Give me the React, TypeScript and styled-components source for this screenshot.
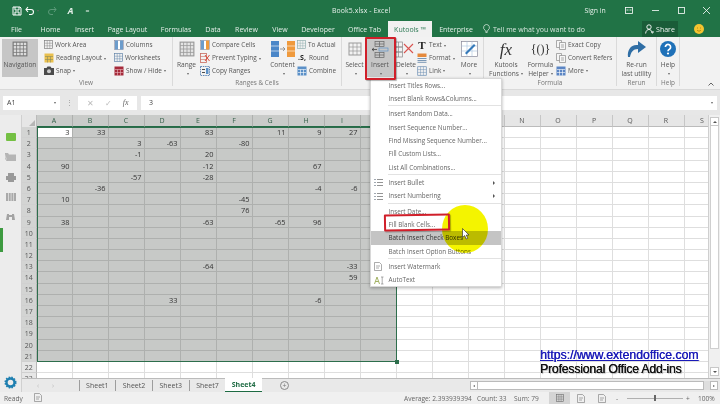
import React from "react";
import styled, { createGlobalStyle } from "styled-components";

const Global = createGlobalStyle`
  html, body { margin: 0; padding: 0; background: #fff; overflow: hidden; }
  * { box-sizing: border-box; }
`;

const UI = `"Open Sans", "Noto Sans", "Liberation Sans", sans-serif`;

const Page = styled.div`
  position: relative; width: 720px; height: 404px; overflow: hidden;
  display: flex; flex-direction: column;
  font-family: ${UI}; font-size: 7px; color: #555; background: #f1f1f1;
  filter: blur(0.3px);
`;

/* Title bar */
const TitleBar = styled.div`
  height: 21px; background: #217346; color: #e6f0ea; display: flex; align-items: center; flex: none;
  font-size: 6.9px;
`;
const QuickBtn = styled.div<{ $w: number }>`
  width: ${p => p.$w}px; display: flex; justify-content: center; align-items: center; flex: none; height: 21px;
`;
const QuickLetter = styled.span`
  font-style: italic; font-weight: 700; font-size: 9px;
`;
const TitleText = styled.div`
  margin-left: 237px; width: 252px; flex: none; white-space: pre; letter-spacing: 0.1px;
`;
const WinBtn = styled.div<{ $w: number; $ml?: number }>`
  width: ${p => p.$w}px; margin-left: ${p => p.$ml ?? 0}px; flex: none; display: flex; justify-content: center; align-items: center; white-space: nowrap;
`;

/* Tabs */
const TabBar = styled.div`
  height: 16px; background: #217346; display: flex; align-items: stretch; flex: none; color: #e4eee8; font-size: 7px;
`;
const Tab = styled.div<{ $w: number; $active?: boolean }>`
  width: ${p => p.$w}px; flex: none; display: flex; align-items: center; justify-content: center; white-space: nowrap;
  background: ${p => (p.$active ? "#f1f1f1" : "transparent")};
  color: ${p => (p.$active ? "#2e7a55" : "#e4eee8")};
`;
const TellMe = styled.div`
  width: 162px; flex: none; display: flex; align-items: center; gap: 3px; padding-left: 3px; white-space: nowrap; color: #d5e5dc;
`;
const ShareBtn = styled.div`
  width: 36px; flex: none; background: #1a5c38; display: flex; align-items: center; justify-content: center; gap: 2px; color: #eef5f1;
`;
const Smile = styled.div`
  margin-left: 16px; width: 10px; height: 10px; margin-top: 3px; border-radius: 50%; background: #f4c430;
  display: flex; align-items: center; justify-content: center;
`;

/* Ribbon */
const Ribbon = styled.div`
  height: 53px; background: #f2f2f2; display: flex; flex: none; border-bottom: 1px solid #d9d9d9; position: relative;
`;
const Group = styled.div<{ $w: number }>`
  width: ${p => p.$w}px; flex: none; display: flex; flex-direction: column;
  border-right: 1px solid #dadada;
  margin-bottom: 3px;
`;
const GroupBody = styled.div<{ $pad?: number }>`
  height: 40px; display: flex; padding-top: 1.5px; padding-left: ${p => p.$pad ?? 0}px;
`;
const GroupLabel = styled.div`
  text-align: center; font-size: 6.4px; color: #777; line-height: 8px; margin-top: 2px;
`;
const BigBtn = styled.div<{ $w: number; $on?: boolean; $mr?: number }>`
  width: ${p => p.$w}px; flex: none; height: 38px; display: flex; flex-direction: column; align-items: center;
  margin-right: ${p => p.$mr ?? 0}px; text-align: center; line-height: 9px; white-space: nowrap;
  background: ${p => (p.$on ? "#c6c6c6" : "transparent")}; font-size: 6.6px; color: #555;
  padding-top: 2px;
`;
const IconSlot = styled.div`
  height: 17px; display: flex; align-items: center; justify-content: center; flex: none; margin-bottom: 2px;
`;
const SerifGlyph = styled(IconSlot)<{ $size: number; $italic?: boolean }>`
  font-family: "Liberation Serif", serif; font-size: ${p => p.$size}px; color: #333;
  font-style: ${p => (p.$italic ? "italic" : "normal")};
`;
const Caret = styled.span`
  display: inline-block; width: 0; height: 0; border: 1.5px solid transparent; border-top: 2px solid #666; border-bottom: 0; margin-left: 2px; vertical-align: middle;
`;
const TurnedCaret = styled(Caret)<{ $deg: number }>`
  margin: 0; transform: rotate(${p => p.$deg}deg);
`;
const Stack = styled.div<{ $w: number }>`
  width: ${p => p.$w}px; flex: none; display: flex; flex-direction: column;
`;
const SmallBtn = styled.div`
  height: 13px; display: flex; align-items: center; gap: 2px; white-space: nowrap; color: #555; font-size: 6.45px;
`;
const GlyphIcon = styled.span<{ $serif?: boolean }>`
  width: 10px; text-align: center; line-height: 10px; color: #222;
  font-family: ${p => (p.$serif ? `"Liberation Serif", serif` : "inherit")};
  font-size: ${p => (p.$serif ? 11 : 7)}px; font-weight: 700;
`;
const Collapse = styled.div`
  position: absolute; right: 6px; bottom: 3px; color: #555; line-height: 0;
`;

/* Formula bar */
const FormulaBar = styled.div`
  height: 25px; background: #e7e7e7; display: flex; align-items: center; padding: 0 3px; flex: none;
`;
const NameBox = styled.div`
  width: 57px; height: 14px; background: #fff; display: flex; align-items: center; justify-content: space-between;
  padding: 0 4px; font-size: 7px; color: #444;
`;
const Dots = styled.div`
  width: 18px; text-align: center; color: #999; font-size: 7px;
`;
const FxBox = styled.div`
  width: 59px; height: 14px; margin-right: 4px; background: #fff; display: flex; align-items: center; justify-content: space-around; padding: 0 3px; color: #bbb; font-size: 8px;
`;
const FxMark = styled.span`
  font-family: "Liberation Serif", serif; font-style: italic; color: #666;
`;
const FormulaInput = styled.div`
  flex: 1; height: 14px; background: #fff; display: flex; align-items: center; justify-content: space-between;
  padding: 0 4px 0 8px; color: #444; font-size: 7px;
`;

/* Sheet */
const SheetRegion = styled.div`
  flex: 1; display: flex; min-height: 0; background: #fff;
`;
const Sidebar = styled.div`
  width: 22px; flex: none; background: #ececec; border-right: 1px solid #d0d0d0; display: flex; flex-direction: column; align-items: center;
  padding-top: 12px;
`;
const SideIcon = styled.div<{ $h: number }>`
  height: ${p => p.$h}px; display: flex; align-items: center; justify-content: center; flex: none;
`;
const SideMark = styled.div`
  align-self: flex-start; width: 3px; height: 24px; background: #3d9a40; flex: none; margin-top: 2px;
`;
const Gear = styled.div`
  margin-top: auto; margin-bottom: 3px; line-height: 0;
`;
const GridArea = styled.div`
  flex: 1; min-width: 0; display: flex; flex-direction: column;
`;
const GridTop = styled.div`
  flex: 1; min-height: 0; display: flex;
`;
const GridPane = styled.div`
  flex: 1; min-width: 0; overflow: hidden; position: relative;
`;
const HeadRow = styled.div`
  display: flex; height: 12px;
`;
const Corner = styled.div`
  width: 14.5px; flex: none; background: #e6e6e6; position: relative; border-right: 1px solid #bbb;
  &::after { content: ""; position: absolute; right: 1px; bottom: 1px; border: 3px solid transparent; border-right-color: #b5b5b5; border-bottom-color: #b5b5b5; }
`;
const ColHead = styled.div<{ $sel?: boolean }>`
  width: 36px; flex: none; text-align: center; line-height: 12px; font-size: 7px;
  background: ${p => (p.$sel ? "#c9cbc9" : "#e6e6e6")}; color: ${p => (p.$sel ? "#35604a" : "#555")};
  border-right: 1px solid ${p => (p.$sel ? "#aeb0ae" : "#c6c6c6")};
  border-bottom: 1px solid ${p => (p.$sel ? "#256b47" : "#bbb")};
`;
const Row = styled.div`
  display: flex; height: 11.2px;
`;
const RowHead = styled.div<{ $sel?: boolean }>`
  width: 14.5px; flex: none; text-align: center; font-size: 7px; line-height: 11px; color: #555;
  background: ${p => (p.$sel ? "#d3d4d3" : "#e6e6e6")};
  border-right: 1px solid #b5b5b5;
  border-bottom: 1px solid #d0d0d0;
`;
const Cell = styled.div<{ $sel?: boolean; $active?: boolean }>`
  width: 36px; flex: none; text-align: right; padding-right: 2px; font-size: 7.4px; line-height: 11px; color: #333;
  background: ${p => (p.$active ? "#fff" : p.$sel ? "#c7c9c7" : "#fff")};
  border-right: 1px solid ${p => (p.$sel ? "#aeb0ae" : "#dedede")};
  border-bottom: 1px solid ${p => (p.$sel ? "#aeb0ae" : "#dedede")};
`;
const SelectionFrame = styled.div`
  position: absolute; left: 14.5px; top: 12px; width: 360.5px; height: 235.2px; border: 1px solid #2d6e4c; pointer-events: none;
  &::after { content: ""; position: absolute; right: -2.5px; bottom: -2.5px; width: 4px; height: 4px; background: #2d6e4c; }
`;
const VScroll = styled.div`
  width: 12px; flex: none; background: #f0f0f0; border-left: 1px solid #cfcfcf; display: flex; flex-direction: column; padding: 2px 1px;
`;
const VArrow = styled.div<{ $down?: boolean }>`
  height: 9px; flex: none; background: #fff; border: 1px solid #c8c8c8; display: flex; align-items: center; justify-content: center;
  &::after { content: ""; border: 2px solid transparent; ${p => (p.$down ? "border-top: 2.5px solid #555; border-bottom: 0;" : "border-bottom: 2.5px solid #555; border-top: 0;")} }
`;
const VThumb = styled.div`
  flex: 1; background: #fff; border-left: 1px solid #cfcfcf; border-right: 1px solid #cfcfcf; margin-bottom: 18px; border-bottom: 1px solid #cfcfcf;
`;

/* Sheet tabs */
const TabStrip = styled.div`
  height: 14px; flex: none; background: #e9e9e9; display: flex; align-items: stretch; color: #555; font-size: 7px; border-top: 1px solid #bbb;
`;
const NavArrows = styled.div`
  width: 56.5px; flex: none; display: flex; gap: 13px; align-items: center; padding-left: 15px; color: #bbb; font-size: 7px;
`;
const SheetTab = styled.div<{ $active?: boolean }>`
  width: 36.7px; flex: none; display: flex; align-items: center; justify-content: center;
  border-left: ${p => (p.$active ? "none" : "1px solid #9d9d9d")};
  margin: ${p => (p.$active ? "-1px 0 0 0" : "1px 0")};
  background: ${p => (p.$active ? "#fff" : "transparent")};
  color: ${p => (p.$active ? "#1e6b43" : "#555")};
  font-weight: ${p => (p.$active ? 700 : 400)};
  border-bottom: ${p => (p.$active ? "1.5px solid #1e6b43" : "none")};
`;
const AddSheet = styled.div`
  width: 9px; height: 9px; margin: auto 0 auto 18px; border: 1px solid #8a8a8a; border-radius: 50%; display: flex; align-items: center; justify-content: center;
  font-size: 7px; line-height: 7px; color: #777; flex: none;
`;
const HScrollZone = styled.div`
  margin-left: auto; width: 259px; flex: none; display: flex; align-items: center; padding-right: 2px; padding-left: 9px;
`;
const HArrow = styled.div`
  width: 8px; height: 9px; background: #fff; border: 1px solid #bbb; flex: none; display: flex; align-items: center; justify-content: center;
`;
const HThumb = styled.div`
  width: 226px; height: 9px; background: #fff; border: 1px solid #bbb; border-left: none; flex: none;
`;
const HTrack = styled.div`
  flex: 1; height: 9px; background: #dedede;
`;

/* Status */
const StatusBar = styled.div`
  height: 12px; flex: none; background: #f0f0f0; display: flex; align-items: center; font-size: 6.6px; color: #666; white-space: nowrap;
`;
const StatusItem = styled.div<{ $w: number; $ml?: number }>`
  width: ${p => p.$w}px; margin-left: ${p => p.$ml ?? 0}px; flex: none;
`;
const ViewBtn = styled.div<{ $on?: boolean }>`
  width: 21px; height: 12px; flex: none; display: flex; align-items: center; justify-content: center;
  background: ${p => (p.$on ? "#d4d4d4" : "transparent")};
`;
const Zoom = styled.div`
  width: 56px; flex: none; margin: 0 3px; height: 1px; background: #b0b0b0; position: relative;
  &::after { content: ""; position: absolute; left: 27px; top: -2.5px; width: 2px; height: 6px; background: #666; }
`;

/* Overlays */
const Menu = styled.div`
  position: absolute; left: 370px; top: 77.6px; width: 132px; height: 209.4px; background: #fff;
  box-shadow: 0 1px 3px rgba(0,0,0,.3); border: 1px solid #d8d8d8; z-index: 5;
`;
const MenuItem = styled.div<{ $hover?: boolean }>`
  height: 13.4px; display: flex; align-items: center; padding-left: 17.5px; position: relative; font-size: 6.35px;
  color: ${p => (p.$hover ? "#333" : "#666")};
  background: ${p => (p.$hover ? "#c4c4c4" : "transparent")}; white-space: nowrap;
`;
const MenuIcon = styled.span`
  position: absolute; left: 3px; top: 2.5px; line-height: 0;
`;
const MenuSub = styled.span`
  position: absolute; right: 6px; top: 5px; border: 2px solid transparent; border-left: 2.5px solid #555; border-right: 0;
`;
const MenuSep = styled.div`
  height: 1px; margin: 0 0 0.75px 17px; background: #e2e2e2;
`;
const RedBox = styled.div<{ $x: number; $y: number; $w: number; $h: number; $r?: number }>`
  position: absolute; left: ${p => p.$x}px; top: ${p => p.$y}px; width: ${p => p.$w}px; height: ${p => p.$h}px;
  border: 2px solid #d01f2a; border-radius: 1px; transform: rotate(${p => p.$r ?? 0}deg); z-index: 7; box-shadow: 1px 1px 1px rgba(0,0,0,.3);
`;
const Spot = styled.div`
  position: absolute; left: 442px; top: 205px; width: 46px; height: 48px; border-radius: 50%; background: #f4f400; mix-blend-mode: multiply; z-index: 6;
`;
const Pointer = styled.svg`
  position: absolute; left: 462px; top: 228px; z-index: 8;
`;
const Promo = styled.div`
  position: absolute; left: 540px; top: 348px; z-index: 4; font-family: "Liberation Sans", Arial, sans-serif; font-size: 12.25px; line-height: 14px; white-space: nowrap;
`;
const PromoLink = styled.div`
  color: #1a1ab8; text-decoration: underline; text-shadow: 0.4px 0 0 #1a1ab8;
`;
const PromoLine = styled.div`
  color: #111; letter-spacing: -0.2px; text-shadow: 0.2px 0 0 #111, 1px 1px 1px rgba(0,0,0,.3);
`;

/* Drawings */
const GridIcon = ({ s = 12, c = "#888", fill = "none", n = 3 }: { s?: number; c?: string; fill?: string; n?: number }) => {
  const lines = Array.from({ length: n - 1 }, (_, i) => ((i + 1) * 12) / n + 1);
  return (
    <svg width={s} height={s} viewBox="0 0 14 14">
      <rect x="1" y="1" width="12" height="12" fill={fill} stroke={c} />
      {lines.map(v => (
        <g key={v} stroke={c} strokeWidth="0.7">
          <line x1={v} y1="1" x2={v} y2="13" />
          <line x1="1" y1={v} x2="13" y2={v} />
        </g>
      ))}
    </svg>
  );
};
const ColsIcon = ({ a, b }: { a: string; b: string }) => (
  <svg width="10" height="10" viewBox="0 0 10 10">
    <rect x="0.5" y="0.5" width="9" height="9" fill="#fff" stroke="#889" strokeWidth="0.6" />
    <rect x="1" y="0.5" width="3" height="9" fill={a} />
    <rect x="6" y="0.5" width="3" height="9" fill={b} />
  </svg>
);
const SolidIcon = ({ c, c2 }: { c: string; c2?: string }) => (
  <svg width="10" height="10" viewBox="0 0 10 10">
    <rect x="0.5" y="0.5" width="9" height="9" fill={c} />
    <path d="M1 3.5h8M1 6.5h8M3.5 3.5v6M6.5 3.5v6" stroke={c2 ?? "#fff"} strokeWidth="0.6" />
  </svg>
);
const PreventIcon = () => (
  <svg width="10" height="10" viewBox="0 0 10 10" fill="none">
    <rect x="0.5" y="0.5" width="6" height="9" stroke="#c96a5e" strokeWidth="0.8" />
    <path d="M.5 3.500h6M.5 6.500h6" stroke="#c96a5e" strokeWidth="0.6" />
    <path d="M5 2l4.500 6M9.500 2L5 8" stroke="#d8402f" strokeWidth="0.9" />
  </svg>
);
const CopyRangeIcon = () => (
  <svg width="10" height="10" viewBox="0 0 10 10" fill="none">
    <rect x="0.5" y="0.5" width="9" height="9" stroke="#3f6fa8" strokeWidth="0.8" strokeDasharray="1.500 .8" />
    <path d="M2 3.500h3M2 6.500h3" stroke="#222" strokeWidth="0.8" />
    <rect x="6" y="2" width="2.500" height="6" fill="#5b90c7" />
  </svg>
);
const FormatIcon = () => (
  <svg width="10" height="10" viewBox="0 0 10 10">
    <rect x="0.500" y="0.500" width="9" height="3.500" fill="#e58a3c" />
    <path d="M.5 5.500h9M.5 7.500h9M.5 9.300h9" stroke="#5a7fa5" strokeWidth="0.8" />
  </svg>
);
const DocsIcon = () => (
  <svg width="10" height="10" viewBox="0 0 10 10" fill="#f6f6f6" stroke="#8a8a8a" strokeWidth="0.7">
    <path d="M.5.500h5v7h-5z" /><path d="M3.500 2.500h6v7h-6z" /><path d="M5 5h3M5 7h3" />
  </svg>
);
const SaveIcon = () => (
  <svg width="10" height="10" viewBox="0 0 10 10" fill="none" stroke="#fff" strokeWidth="1">
    <path d="M1 1h7l1 1v7H1z" /><path d="M3 1v3h4V1M3 9V6h4v3" />
  </svg>
);
const UndoIcon = () => (
  <svg width="10" height="9" viewBox="0 0 10 9" fill="none" stroke="#fff" strokeWidth="1.1">
    <path d="M1 3.5h5a2.5 2.5 0 0 1 0 5H4" /><path d="M3 1L1 3.5 3 6" />
  </svg>
);
const RedoIcon = () => (
  <svg width="10" height="9" viewBox="0 0 10 9" fill="none" stroke="#5c9a79" strokeWidth="1">
    <path d="M9 3.5H4a2.5 2.5 0 0 0 0 5h2" /><path d="M7 1l2 2.5L7 6" />
  </svg>
);
const Bulb = () => (
  <svg width="7" height="10" viewBox="0 0 7 10" fill="none" stroke="#e6f0ea" strokeWidth="0.7">
    <path d="M3.5 .5a3 3 0 0 0-1.6 5.5c.4.4.5.8.5 1.3h2.2c0-.5.1-.9.5-1.3A3 3 0 0 0 3.5.5zM2.5 8.5h2" />
  </svg>
);
const Person = () => (
  <svg width="9" height="10" viewBox="0 0 9 10" fill="none" stroke="#fff" strokeWidth="0.9">
    <circle cx="4" cy="3" r="2.2" /><path d="M.6 9.5c.3-3 2-4 3.4-4s3 1 3.4 4M6 8h3" />
  </svg>
);
const ReRun = () => (
  <svg width="20" height="17" viewBox="0 0 20 17">
    <path d="M1 16C0 9 4 3 11 4V0l8 6-8 6V8C6 8 4 11 3 16z" fill="#2f6ea5" />
  </svg>
);
const HelpIcon = () => (
  <svg width="16" height="16" viewBox="0 0 16 16">
    <circle cx="8" cy="8" r="8" fill="#1f71b8" />
    <path d="M5.4 6a2.6 2.6 0 1 1 4 2.2C8.400 8.800 8 9.200 8 10.200" fill="none" stroke="#fff" strokeWidth="1.7" />
    <circle cx="8" cy="12.500" r="1.100" fill="#fff" />
  </svg>
);
const InsertIcon = () => (
  <svg width="18" height="17" viewBox="0 0 18 17" fill="none" stroke="#666" strokeWidth="0.7">
    <rect x="4" y="0.500" width="9" height="5" /><path d="M8.500.5v5M4 3h9" />
    <rect x="4" y="11.500" width="9" height="5" /><path d="M8.500 11.500v5M4 14h9" />
    <rect x="8" y="7" width="9" height="3" stroke="#5d93c9" /><path d="M6 8.500H1M3 7L1 8.500 3 10" stroke="#333" />
  </svg>
);
const DeleteIcon = () => (
  <svg width="24" height="17" viewBox="0 0 24 17" fill="none" stroke="#888" strokeWidth="0.7">
    <rect x="0.500" y="1" width="8" height="5" /><rect x="0.500" y="11" width="8" height="5" /><rect x="0.500" y="6" width="8" height="5" />
    <path d="M4.500 1v15" /><path d="M10 3l9 9M19 3l-9 9" stroke="#d9534f" strokeWidth="1.1" />
  </svg>
);
const ContentIcon = () => (
  <svg width="24" height="17" viewBox="0 0 24 17">
    <rect x="0" y="0" width="8" height="16" fill="#4a86c8" />
    <rect x="16" y="0" width="8" height="16" fill="#ef9a3d" />
    <path d="M0 5h8M0 10h8M16 5h8M16 10h8" stroke="#fff" strokeWidth="0.6" />
    <path d="M9 8h5M12 6l2 2-2 2" stroke="#777" strokeWidth="0.7" fill="none" />
  </svg>
);
const MoreIcon = () => (
  <svg width="17" height="16" viewBox="0 0 17 16">
    <rect x="0.500" y="0.500" width="16" height="15" fill="#fff" stroke="#889" strokeWidth="0.7" />
    <path d="M0.500 5h16M0.500 10h16M6 .5v15M11 .5v15" stroke="#a9c3dd" strokeWidth="0.6" />
    <path d="M4 12L13 3l1.500 1.500-9 9z" fill="#3579b9" />
  </svg>
);
const Camera = () => (
  <svg width="10" height="9" viewBox="0 0 10 9">
    <path d="M0 2h2.500l1-1.500h3L7.500 2H10v7H0z" fill="#4b4b4b" /><circle cx="5" cy="5.300" r="2" fill="#ccc" />
  </svg>
);
const ListIcon = () => (
  <svg width="9" height="9" viewBox="0 0 9 9" stroke="#666" strokeWidth="0.7">
    <path d="M3 1.500h6M3 4.500h6M3 7.500h6" /><path d="M0.500 1.500h1M0.500 4.500h1M0.500 7.500h1" strokeWidth="1.100" stroke="#456" />
  </svg>
);
const PageIcon = () => (
  <svg width="8" height="9" viewBox="0 0 8 9" fill="none" stroke="#888" strokeWidth="0.7">
    <path d="M.5.500h5l2 2v6h-7z" /><path d="M2 4h4M2 6h3" />
  </svg>
);
const AutoTextIcon = () => (
  <svg width="10" height="9" viewBox="0 0 10 9" fill="none">
    <path d="M.5 8L3 1l2.500 7M1.500 5.500h3" stroke="#9aaa55" strokeWidth="0.9" />
    <path d="M7 1h2.500M8.200 1v7M7 8h2.500" stroke="#777" strokeWidth="0.6" />
  </svg>
);
const FolderIcon = () => (
  <svg width="11" height="10" viewBox="0 0 11 10">
    <path d="M0 1h3l1 1.500h7V9H2z" fill="#b5b5b5" /><path d="M0 1v5l2 3" stroke="#999" fill="none" strokeWidth=".6" />
  </svg>
);
const ColumnsSideIcon = () => (
  <svg width="10" height="8" viewBox="0 0 10 8" fill="#a9a9a9">
    <rect x="0" width="2" height="8" /><rect x="2.700" width="2" height="8" /><rect x="5.400" width="2" height="8" /><rect x="8" width="2" height="8" />
  </svg>
);
const GearIcon = () => (
  <svg width="13" height="13" viewBox="0 0 13 13">
    <circle cx="6.500" cy="6.500" r="4" fill="none" stroke="#1e7fb0" strokeWidth="2.400" />
    <circle cx="6.500" cy="6.500" r="5.300" fill="none" stroke="#1e7fb0" strokeWidth="1.500" strokeDasharray="1.500 1.300" />
  </svg>
);

const ICols = "ABCDEFGHIJKLMNOPQRS".split("");
const DATA: Record<number, Record<string, number>> = {
  1: { A: 3, B: 33, E: 83, G: 11, H: 9, I: 27 },
  2: { C: 3, D: -63, F: -80 },
  3: { C: -1, E: 20 },
  4: { A: 90, E: -12, H: 67 },
  5: { C: -57, E: -28 },
  6: { B: -36, H: -4, I: -6 },
  7: { A: 10, F: -45 },
  8: { F: 76 },
  9: { A: 38, E: -63, G: -65, H: 96 },
  13: { E: -64, I: -33 },
  14: { I: 59 },
  16: { D: 33, H: -6 },
};
const ROWS = Array.from({ length: 23 }, (_, i) => i + 1);
const isSelCol = (c: string) => "ABCDEFGHIJ".includes(c);

const Small = ({ icon, label, caret }: { icon: React.ReactNode; label: string; caret?: boolean }) => (
  <SmallBtn>{icon}<span>{label}{caret && <Caret />}</span></SmallBtn>
);

export default function App() {
  return (
    <Page>
      <Global />
      <TitleBar>
        <QuickBtn $w={11} />
        <QuickBtn $w={11}><SaveIcon /></QuickBtn>
        <QuickBtn $w={20}><UndoIcon /><Caret /></QuickBtn>
        <QuickBtn $w={19}><RedoIcon /></QuickBtn>
        <QuickBtn $w={19}><QuickLetter>A</QuickLetter></QuickBtn>
        <QuickBtn $w={15}>=</QuickBtn>
        <TitleText>{"Book5.xlsx\u00a0-\u00a0Excel"}</TitleText>
        <WinBtn $w={22}>Sign in</WinBtn>
        <WinBtn $w={22} $ml={12}>
          <svg width="8" height="7" viewBox="0 0 8 7" fill="none" stroke="#fff" strokeWidth="0.8"><rect x=".5" y=".5" width="7" height="6" /><path d="M1.500 3h2M4.500 3h2" /></svg>
        </WinBtn>
        <WinBtn $w={30}><svg width="7" height="7" viewBox="0 0 7 7"><path d="M0 3.500h7" stroke="#fff" strokeWidth=".8" /></svg></WinBtn>
        <WinBtn $w={22}><svg width="7" height="7" viewBox="0 0 7 7" fill="none"><rect x=".5" y=".5" width="6" height="6" stroke="#fff" strokeWidth=".8" /></svg></WinBtn>
        <WinBtn $w={28}><svg width="7" height="7" viewBox="0 0 7 7"><path d="M0 0l7 7M7 0L0 7" stroke="#fff" strokeWidth=".8" /></svg></WinBtn>
      </TitleBar>

      <TabBar>
        <Tab $w={33}>File</Tab>
        <Tab $w={35}>Home</Tab>
        <Tab $w={33}>Insert</Tab>
        <Tab $w={53}>Page Layout</Tab>
        <Tab $w={44}>Formulas</Tab>
        <Tab $w={30}>Data</Tab>
        <Tab $w={37}>Review</Tab>
        <Tab $w={30}>View</Tab>
        <Tab $w={46}>Developer</Tab>
        <Tab $w={47}>Office Tab</Tab>
        <Tab $w={44} $active>Kutools ™</Tab>
        <Tab $w={48}>Enterprise</Tab>
        <TellMe><Bulb />Tell me what you want to do</TellMe>
        <ShareBtn><Person />Share</ShareBtn>
        <Smile>
          <svg width="8" height="8" viewBox="0 0 8 8" fill="none" stroke="#8a6a00" strokeWidth="0.6"><path d="M2 5c1 1.500 3 1.500 4 0M2.500 2.500v1M5.500 2.500v1" /></svg>
        </Smile>
      </TabBar>

      <Ribbon>
        <Group $w={173}>
          <GroupBody $pad={2}>
            <BigBtn $w={36} $on $mr={6}>
              <IconSlot><GridIcon s={16} c="#777" fill="#dcdcdc" n={4} /></IconSlot>
              Navigation
            </BigBtn>
            <Stack $w={70}>
              <Small icon={<GridIcon s={9} c="#777" />} label="Work Area" />
              <Small icon={<SolidIcon c="#e9c04f" c2="#8a8a5a" />} label="Reading Layout" caret />
              <Small icon={<Camera />} label="Snap" caret />
            </Stack>
            <Stack $w={60}>
              <Small icon={<ColsIcon a="#6d9ccb" b="#6d9ccb" />} label="Columns" />
              <Small icon={<GridIcon s={9} c="#5a7fa5" />} label="Worksheets" />
              <Small icon={<SolidIcon c="#a52a3a" c2="#e9b9bf" />} label="Show / Hide" caret />
            </Stack>
          </GroupBody>
          <GroupLabel>View</GroupLabel>
        </Group>

        <Group $w={169}>
          <GroupBody $pad={3}>
            <BigBtn $w={21} $mr={3}>
              <IconSlot><GridIcon s={16} c="#999" fill="#e4e4e4" n={4} /></IconSlot>
              Range
              <div><Caret /></div>
            </BigBtn>
            <Stack $w={70}>
              <Small icon={<ColsIcon a="#6d9ccb" b="#ef9a3d" />} label="Compare Cells" />
              <Small icon={<PreventIcon />} label="Prevent Typing" caret />
              <Small icon={<CopyRangeIcon />} label="Copy Ranges" />
            </Stack>
            <BigBtn $w={25} $mr={2}>
              <IconSlot><ContentIcon /></IconSlot>
              Content
              <div><Caret /></div>
            </BigBtn>
            <Stack $w={45}>
              <Small icon={<GridIcon s={9} c="#8aa" />} label="To Actual" />
              <Small icon={<GlyphIcon>.S,</GlyphIcon>} label="Round" />
              <Small icon={<SolidIcon c="#5b90c7" />} label="Combine" />
            </Stack>
          </GroupBody>
          <GroupLabel>Ranges &amp; Cells</GroupLabel>
        </Group>

        <Group $w={142}>
          <GroupBody $pad={2}>
            <BigBtn $w={21}>
              <IconSlot><GridIcon s={14} c="#999" /></IconSlot>
              Select
              <div><Caret /></div>
            </BigBtn>
            <BigBtn $w={30} $on>
              <IconSlot><InsertIcon /></IconSlot>
              Insert
              <div><Caret /></div>
            </BigBtn>
            <BigBtn $w={22}>
              <IconSlot><DeleteIcon /></IconSlot>
              Delete
              <div><Caret /></div>
            </BigBtn>
            <Stack $w={40}>
              <Small icon={<GlyphIcon $serif>T</GlyphIcon>} label="Text" caret />
              <Small icon={<FormatIcon />} label="Format" caret />
              <Small icon={<GridIcon s={10} c="#6c8fb3" />} label="Link" caret />
            </Stack>
            <BigBtn $w={24}>
              <IconSlot><MoreIcon /></IconSlot>
              More
              <div><Caret /></div>
            </BigBtn>
          </GroupBody>
          <GroupLabel />
        </Group>

        <Group $w={133}>
          <GroupBody $pad={3}>
            <BigBtn $w={38}>
              <SerifGlyph $size={17} $italic>fx</SerifGlyph>
              Kutools
              <div>Functions<Caret /></div>
            </BigBtn>
            <BigBtn $w={31}>
              <SerifGlyph $size={12}>{"{()}"}</SerifGlyph>
              Formula
              <div>Helper<Caret /></div>
            </BigBtn>
            <Stack $w={60}>
              <Small icon={<DocsIcon />} label="Exact Copy" />
              <Small icon={<DocsIcon />} label="Convert Refers" />
              <Small icon={<SolidIcon c="#5b85c4" />} label="More" caret />
            </Stack>
          </GroupBody>
          <GroupLabel>Formula</GroupLabel>
        </Group>

        <Group $w={40}>
          <GroupBody>
            <BigBtn $w={39}>
              <IconSlot><ReRun /></IconSlot>
              Re-run
              <div>last utility</div>
            </BigBtn>
          </GroupBody>
          <GroupLabel>Rerun</GroupLabel>
        </Group>

        <Group $w={23}>
          <GroupBody>
            <BigBtn $w={22}>
              <IconSlot><HelpIcon /></IconSlot>
              Help
              <div><Caret /></div>
            </BigBtn>
          </GroupBody>
          <GroupLabel>Help</GroupLabel>
        </Group>
        <Collapse>
          <svg width="6" height="4" viewBox="0 0 6 4" fill="none" stroke="#555" strokeWidth="0.9"><path d="M.5 3.500L3 1l2.500 2.500" /></svg>
        </Collapse>
      </Ribbon>

      <FormulaBar>
        <NameBox>A1<Caret /></NameBox>
        <Dots>⋮</Dots>
        <FxBox><span>✕</span><span>✓</span><FxMark>fx</FxMark></FxBox>
        <FormulaInput>3<Caret /></FormulaInput>
      </FormulaBar>

      <SheetRegion>
        <Sidebar>
          <SideIcon $h={20}>
            <svg width="10" height="8" viewBox="0 0 10 8"><rect width="10" height="8" rx="1" fill="#74c043" /></svg>
          </SideIcon>
          <SideIcon $h={20}><FolderIcon /></SideIcon>
          <SideIcon $h={20}>
            <svg width="10" height="9" viewBox="0 0 10 9"><path d="M2 0h6v3H2zM0 3h10v4H8v2H2V7H0z" fill="#999" /></svg>
          </SideIcon>
          <SideIcon $h={20}><ColumnsSideIcon /></SideIcon>
          <SideIcon $h={19}>
            <svg width="11" height="9" viewBox="0 0 11 9"><path d="M1 8l1-6h2v6zM7 8V2h2l1 6zM4 3h3v2H4z" fill="#a3a3a3" /></svg>
          </SideIcon>
          <SideMark />
          <Gear><GearIcon /></Gear>
        </Sidebar>

        <GridArea>
          <GridTop>
            <GridPane>
              <HeadRow>
                <Corner />
                {ICols.map(c => <ColHead key={c} $sel={isSelCol(c)}>{c}</ColHead>)}
              </HeadRow>
              {ROWS.map(r => (
                <Row key={r}>
                  <RowHead $sel={r <= 21}>{r}</RowHead>
                  {ICols.map(c => (
                    <Cell key={c} $sel={r <= 21 && isSelCol(c)} $active={r === 1 && c === "A"}>
                      {DATA[r]?.[c]}
                    </Cell>
                  ))}
                </Row>
              ))}
              <SelectionFrame />
            </GridPane>
            <VScroll>
              <VArrow />
              <VThumb />
              <VArrow $down />
            </VScroll>
          </GridTop>

          <TabStrip>
            <NavArrows><span>‹</span><span>›</span></NavArrows>
            {["Sheet1", "Sheet2", "Sheet3", "Sheet7"].map(s => <SheetTab key={s}>{s}</SheetTab>)}
            <SheetTab $active>Sheet4</SheetTab>
            <AddSheet>+</AddSheet>
            <HScrollZone>
              <HArrow><TurnedCaret $deg={90} /></HArrow>
              <HThumb />
              <HTrack />
              <HArrow><TurnedCaret $deg={-90} /></HArrow>
            </HScrollZone>
          </TabStrip>
        </GridArea>
      </SheetRegion>

      <StatusBar>
        <StatusItem $w={30} $ml={4}>Ready</StatusItem>
        <StatusItem $w={370}><PageIcon /></StatusItem>
        <StatusItem $w={73}>Average: 2.393939394</StatusItem>
        <StatusItem $w={37}>Count: 33</StatusItem>
        <StatusItem $w={35}>Sum: 79</StatusItem>
        <ViewBtn $on><GridIcon s={8} c="#666" n={3} /></ViewBtn>
        <ViewBtn><PageIcon /></ViewBtn>
        <ViewBtn><PageIcon /></ViewBtn>
        <StatusItem $w={8} $ml={4}>-</StatusItem>
        <Zoom />
        <StatusItem $w={12}>+</StatusItem>
        <StatusItem $w={20}>100%</StatusItem>
      </StatusBar>

      <Menu>
        <MenuItem>Insert Titles Rows...</MenuItem>
        <MenuItem>Insert Blank Rows&amp;Columns...</MenuItem>
        <MenuSep />
        <MenuItem>Insert Random Data...</MenuItem>
        <MenuItem>Insert Sequence Number...</MenuItem>
        <MenuItem>Find Missing Sequence Number...</MenuItem>
        <MenuItem>Fill Custom Lists...</MenuItem>
        <MenuItem>List All Combinations...</MenuItem>
        <MenuSep />
        <MenuItem><MenuIcon><ListIcon /></MenuIcon>Insert Bullet<MenuSub /></MenuItem>
        <MenuItem><MenuIcon><ListIcon /></MenuIcon>Insert Numbering<MenuSub /></MenuItem>
        <MenuSep />
        <MenuItem>Insert Date...</MenuItem>
        <MenuItem>Fill Blank Cells...</MenuItem>
        <MenuItem $hover>Batch Insert Check Boxes</MenuItem>
        <MenuItem>Batch Insert Option Buttons</MenuItem>
        <MenuSep />
        <MenuItem><MenuIcon><PageIcon /></MenuIcon>Insert Watermark</MenuItem>
        <MenuItem><MenuIcon><AutoTextIcon /></MenuIcon>AutoText</MenuItem>
      </Menu>

      <RedBox $x={365} $y={37} $w={31} $h={43} />
      <RedBox $x={384} $y={214} $w={66} $h={17} $r={-1} />
      <Spot />
      <Pointer width="8" height="12" viewBox="0 0 8 12">
        <path d="M.5.500v9l2.200-2 1.500 3.500 1.500-.7L4.300 7H7z" fill="#fff" stroke="#222" strokeWidth="0.6" />
      </Pointer>

      <Promo>
        <PromoLink>https://www.extendoffice.com</PromoLink>
        <PromoLine>Professional Office Add-ins</PromoLine>
      </Promo>
    </Page>
  );
}
